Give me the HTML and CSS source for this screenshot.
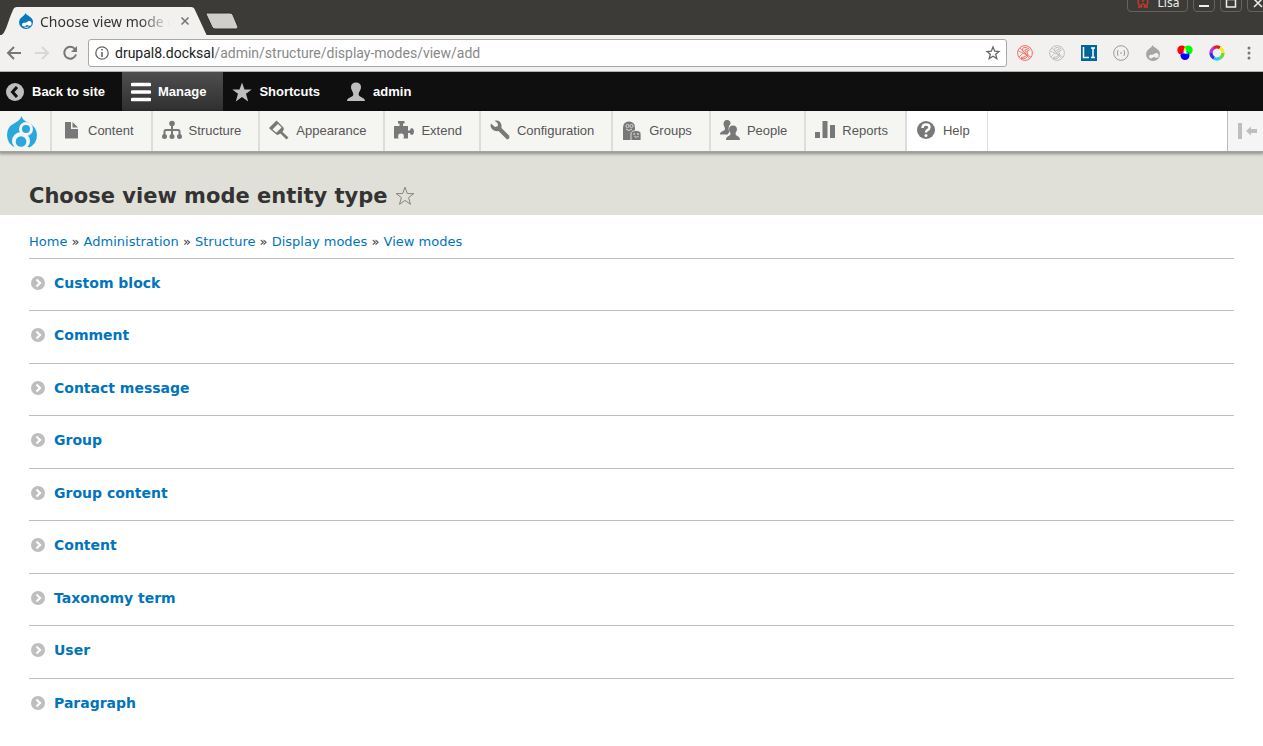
FILE: index.html
```html
<!DOCTYPE html>
<html lang="en">
<head>
  <meta charset="UTF-8">
  <meta name="viewport" content="width=device-width, initial-scale=1.0">
  <title>Choose view mode entity type</title>
  <link rel="stylesheet" href="styles.css">
</head>
<body>
  <!-- Browser window -->
  <div class="titlebar">
    <div class="tab">
      <svg class="tab-shape" viewBox="0 0 208 29" width="208" height="29"><path d="M0 29 C6 27 7 16 13 3 Q14 0 17 0 H191 Q194 0 195 3 L207 29Z" fill="#f2f1f0"/></svg>
      <svg class="favicon" viewBox="0 0 16 16" width="16" height="16"><path d="M7.500 0c1 2 2 2 4 3.500Q15 5.800 15 9A7 7 0 0 1 1 9Q1 5.800 4 4Q7 2 7.500 0Z" fill="#0678be"/><path d="M11.500 8c-2 0-3 1.800-4.300 1.800-1.200 0-3.200-.2-3.200 2s3 2 4.500.5c1.300-1 2 .9 3.800.5s2-4.800-.8-4.800Z" fill="#fff"/><path d="M6.500 14q2 1 4-.2" stroke="#fff" fill="none"/></svg>
      <span class="tab-title">Choose view mode entity type</span>
      <button class="tab-close" aria-label="Close tab"><svg viewBox="0 0 10 10" width="10" height="10"><path d="M1.500 1.500l7 7M8.500 1.500L1.500 8.500" stroke="#777" stroke-width="1.600"/></svg></button>
    </div>
    <button class="new-tab" aria-label="New tab"><svg viewBox="0 0 34 18" width="34" height="18"><path d="M2 1H25Q27 1 28 3L33 15Q33 17 31 17H10Q8 17 7 15L1 2Q1 1 2 1Z" fill="#cfcecd" stroke="#2e2d29"/></svg></button>
    <div class="window-buttons">
      <button class="profile"><svg viewBox="0 0 14 12" width="14" height="12"><path d="M5 1Q-1 5 5 10M9 1Q15 5 9 10M2 10H5.500V7M12 10H8.500V7" fill="none" stroke="#c0392b" stroke-width="1.500"/><path d="M7 0V5M7 6V8" stroke="#c0392b" stroke-width="1.500"/></svg>Lisa</button>
      <button class="win" aria-label="Minimize"><svg viewBox="0 0 12 12" width="12" height="12"><path d="M1 9H11" stroke="#eee" stroke-width="2"/></svg></button>
      <button class="win" aria-label="Maximize"><svg viewBox="0 0 12 12" width="12" height="12"><path d="M1.500 2.500H10.500V10H1.500Z" fill="none" stroke="#eee" stroke-width="1.500"/></svg></button>
      <button class="win" aria-label="Close"><svg viewBox="0 0 12 12" width="12" height="12"><path d="M2 2L10 10M10 2L2 10" stroke="#eee" stroke-width="1.500"/></svg></button>
    </div>
  </div>

  <div class="browser-bar">
    <div class="navs">
      <button aria-label="Back"><svg viewBox="0 0 16 16" width="16" height="16"><path d="M15 8H2M8 2L2 8L8 14" fill="none" stroke="#777" stroke-width="2"/></svg></button>
      <button aria-label="Forward"><svg viewBox="0 0 16 16" width="16" height="16"><path d="M1 8H14M8 2L14 8L8 14" fill="none" stroke="#d8d7d6" stroke-width="2"/></svg></button>
      <button aria-label="Reload"><svg viewBox="0 0 16 16" width="16" height="16"><path d="M13 4A6 6 0 1 0 14 9.500" fill="none" stroke="#777" stroke-width="2"/><path d="M15 1V7H9Z" fill="#777"/></svg></button>
    </div>
    <div class="address">
      <svg viewBox="0 0 14 14" width="14" height="14"><circle cx="7" cy="7" r="6.200" fill="none" stroke="#666" stroke-width="1.300"/><path d="M7 6V11M7 3V4.600" stroke="#666" stroke-width="1.600"/></svg>
      <span class="url">drupal8.docksal<span class="path">/admin/structure/display-modes/view/add</span></span>
      <svg viewBox="0 0 16 16" width="16" height="16"><path d="M8 2L9.700 6.200L14 6.500L10.700 9.300L11.800 13.500L8 11.200L4.200 13.500L5.300 9.300L2 6.500L6.300 6.200Z" fill="none" stroke="#666" stroke-width="1.300"/></svg>
    </div>
    <div class="extensions">
      <svg viewBox="0 0 16 16" width="16" height="16" stroke="#f0705f" fill="none"><circle cx="8" cy="8" r="7.400"/><path d="M12 3.500Q5 1 5.500 5Q6 7 9 8.500Q11 12 4 12.500M12 5.500Q8 3.500 7.500 5.500Q11 7 11 10Q10 14.500 4 13.500"/><path d="M1.500 6L14 12M3 3L13 14M2 12L6 8M10 7L13.500 4" stroke-width=".8"/></svg>
      <svg viewBox="0 0 16 16" width="16" height="16" stroke="#bfbfbf" fill="none"><circle cx="8" cy="8" r="7.400"/><path d="M12 3.500Q5 1 5.500 5Q6 7 9 8.500Q11 12 4 12.500M12 5.500Q8 3.500 7.500 5.500Q11 7 11 10Q10 14.500 4 13.500"/><path d="M1.500 6L14 12M3 3L13 14M2 12L6 8M10 7L13.500 4" stroke-width=".8"/></svg>
      <svg viewBox="0 0 16 16" width="16" height="16"><path d="M0 0H16V16H0Z" fill="#069"/><path d="M2.500 2V12.500H8M10 3H14M12 3V12.500M10 12.500H14" stroke="#fff" stroke-width="1.500" fill="none"/></svg>
      <svg viewBox="0 0 16 16" width="16" height="16" fill="none" stroke="#999"><circle cx="8" cy="8" r="7.300"/><path d="M5.500 5Q4.500 5 4.500 8T5.500 11M10.500 5Q11.500 5 11.500 8T10.500 11M7 8H9"/></svg>
      <svg viewBox="0 0 16 16" width="16" height="16"><path d="M7.500 0c1 2 2 2 4 3.500Q15 5.800 15 9A7 7 0 0 1 1 9Q1 5.800 4 4Q7 2 7.500 0Z" fill="#a5a5a5"/><path d="M11.500 8c-2 0-3 1.800-4.300 1.800-1.200 0-3.200-.2-3.200 2s3 2 4.500.5c1.300-1 2 .9 3.800.5s2-4.800-.8-4.800Z" fill="#f2f1f0"/></svg>
      <svg viewBox="0 0 16 16" width="16" height="16"><circle cx="4.800" cy="5" r="4.500" fill="red"/><circle cx="11.200" cy="5" r="4.500" fill="#0f0"/><circle cx="8" cy="10.500" r="4.500" fill="#00f"/><path d="M8 2L9.500 6H6.500Z" fill="#ff0"/><path d="M4 8.500L7 6L8 9Z" fill="#f0f"/><path d="M12 8.500L9 6L8 9Z" fill="#0ff"/><circle cx="8" cy="7" r="1.500" fill="#fff"/></svg>
      <svg viewBox="0 0 16 16" width="16" height="16" fill="none" stroke-width="3.200"><path d="M4.500 3.200A6 6 0 0 1 11 2.800" stroke="#d22"/><path d="M11 2.800A6 6 0 0 1 14 8" stroke="#ee2"/><path d="M14 8A6 6 0 0 1 11 13.200" stroke="#6d3"/><path d="M11 13.200A6 6 0 0 1 5 13.200" stroke="#2ce"/><path d="M5 13.200A6 6 0 0 1 2 8" stroke="#33d"/><path d="M2 8A6 6 0 0 1 5 2.800" stroke="#b3d"/></svg>
      <svg viewBox="0 0 16 16" width="16" height="16" fill="#777"><circle cx="8" cy="3" r="1.500"/><circle cx="8" cy="8" r="1.500"/><circle cx="8" cy="13" r="1.500"/></svg>
    </div>
  </div>

  <!-- Drupal toolbar -->
  <nav class="toolbar">
    <a class="back" href="#"><svg viewBox="0 0 20 20" width="20" height="20"><circle cx="10" cy="10" r="9" fill="#bebebe"/><path d="M12 5L7.500 10L12 15" fill="none" stroke="#0f0f0f" stroke-width="3"/></svg>Back to site</a>
    <a class="active" href="#"><svg viewBox="0 0 20 20" width="20" height="20"><path d="M1.500 2.500H18.500M1.500 10H18.500M1.500 17.500H18.500" stroke="#fff" stroke-width="3.600" stroke-linecap="round"/></svg>Manage</a>
    <a href="#"><svg viewBox="0 0 20 20" width="20" height="20"><path d="M10 .5L12.500 7.400H19.700L14 11.800L16.200 19.500L10 15L3.800 19.500L6 11.800L.3 7.400H7.500Z" fill="#bebebe"/></svg>Shortcuts</a>
    <a href="#"><svg viewBox="0 0 20 20" width="20" height="20"><path d="M10 .5c3 0 5 1.500 5 4.500 0 3.500-2.300 4.500-2.300 7.500 0 3 6.300 2.500 6.300 6.500H1c0-4 6.300-3.500 6.300-6.500 0-3-2.300-4-2.300-7.500 0-3 2-4.500 5-4.500Z" fill="#bebebe"/></svg>admin</a>
  </nav>

  <nav class="tray">
    <a class="logo" href="#" aria-label="Drupal">
      <svg viewBox="0 0 30 33" width="30" height="33">
        <path d="M14.500 0Q15.500 4 21 6.500Q30 11 30 19Q30 28 21.500 32H9Q0 28 0 19Q0 11 7 7.500Q13.500 4 14.500 0Z" fill="#29a8e0"/>
        <circle cx="19" cy="13" r="7" fill="#f5f5f2"/>
        <circle cx="14" cy="25" r="9" fill="#f5f5f2"/>
        <path d="M8 31H22V33H8Z" fill="#f5f5f2"/>
        <circle cx="19" cy="13" r="4" fill="#29a8e0"/>
        <circle cx="14" cy="25.500" r="5.300" fill="#29a8e0"/>
      </svg>
    </a>
    <a href="#"><svg viewBox="0 0 20 20" width="20" height="20"><path d="M4 2H10V9H17V18.500H4ZM11.500 2L17 7.500H11.500Z"/></svg>Content</a>
    <a href="#"><svg viewBox="0 0 20 20" width="20" height="20"><circle cx="10" cy="3.500" r="2.800"/><path d="M10 4V16M2.500 16V11.500Q2.500 10 4 10H16Q17.500 10 17.500 11.500V16" fill="none" stroke="#787878" stroke-width="2"/><circle cx="2.500" cy="16.500" r="2.500"/><circle cx="10" cy="16.500" r="2.500"/><circle cx="17.500" cy="16.500" r="2.500"/></svg>Structure</a>
    <a href="#"><svg viewBox="0 0 20 20" width="20" height="20"><path d="M0 8L7.500 .5L9.500 2.500L2 10Z"/><path d="M2.500 9.500L9 3L14 8L8 14Z" fill="none" stroke="#787878" stroke-width="1.300"/><path d="M7 13L13 7L15 9L13.500 12L19.500 17.500L17.500 19.500L11.500 13.500L8.500 15Z"/></svg>Appearance</a>
    <a href="#"><svg viewBox="0 0 20 20" width="20" height="20"><path d="M0 6H5.500V3.500H4V1H10.500V3.500H9V6H14V10.500H16Q16 8 18 8Q20 8.500 20 11.500T18 15Q16 15 16 13H14V18.500H9.500Q11 13.500 7 13.500T4.500 18.500H0Z"/></svg>Extend</a>
    <a href="#"><svg viewBox="0 0 20 20" width="20" height="20"><path d="M1 3.500L5 7L8 6L7.500 3L4.500.8Q10-.5 11.500 5V8L19 15.500Q20.500 19 17 19.500L8.500 11Q2 12 .5 6Z"/></svg>Configuration</a>
    <a href="#"><svg viewBox="0 0 20 20" width="20" height="20"><path d="M1 20V8Q1 1.500 7 1.500T13 8V20Z"/><path d="M9 20.500V14Q9 10.500 14 10.500T19 14V20.500Z" stroke="#f5f5f2" stroke-width=".8"/><path d="M4 9Q7 12 10 9M12.500 16.500Q14.500 18 16.500 16.500" fill="none" stroke="#ddd"/><g fill="none" stroke="#ddd" stroke-width=".9"><circle cx="5.500" cy="6" r="1.600"/><circle cx="9.500" cy="6" r="1.600"/><circle cx="12.300" cy="14" r=".6"/><circle cx="16" cy="14" r=".6"/></g></svg>Groups</a>
    <a href="#"><svg viewBox="0 0 20 20" width="20" height="20"><path d="M7 0c2.500 0 4 2 3.500 4Q8 6 8.500 9l1 3-2 2.500H0c0-4 5-3 5-5.500C5 7 3.500 6 3.500 4S4.500 0 7 0Z"/><path d="M13 5.500c2.500 0 4 1.500 4 3.800 0 2-1.500 3-1.500 4.500 0 2.500 4.500 2 4.500 6.200H6c0-4.200 4.500-3.700 4.500-6.200 0-1.500-1.500-2.500-1.500-4.500 0-2.300 1.500-3.800 4-3.800Z"/></svg>People</a>
    <a href="#"><svg viewBox="0 0 20 20" width="20" height="20"><path d="M0 12H5V18H0ZM7.500 1H12.500V18H7.500ZM15 5H20V18H15Z"/></svg>Reports</a>
    <a class="help" href="#"><svg viewBox="0 0 20 20" width="20" height="20"><circle cx="10" cy="10" r="9"/><path d="M6.500 8Q6.500 4.500 10 4.500T13.500 7.500Q13.500 9 11.500 10Q10 11 10 12.500" fill="none" stroke="#fff" stroke-width="2.400"/><circle cx="10" cy="15.500" r="1.500" fill="#fff"/></svg>Help</a>
    <button class="orientation" aria-label="Vertical orientation"><svg viewBox="0 0 20 16" width="20" height="16"><path d="M0 0H4V16H0ZM8 8L13 3.500V6H19V10H13V12.500Z" fill="#bebebe"/></svg></button>
  </nav>

  <header class="page-header">
    <h1>Choose view mode entity type</h1>
    <a href="#" aria-label="Add to shortcuts"><svg viewBox="0 0 20 20" width="20" height="20"><path d="M10 1.200L12.300 7.600H18.800L13.600 11.600L15.500 18.300L10 14.400L4.500 18.300L6.400 11.600L1.200 7.600H7.700Z" fill="none" stroke="#85857a"/></svg></a>
  </header>

  <main>
    <nav class="breadcrumb">
      <a href="#">Home</a> » <a href="#">Administration</a> » <a href="#">Structure</a> » <a href="#">Display modes</a> » <a href="#">View modes</a>
    </nav>
    <ul class="admin-list">
      <li><a href="#">Custom block</a></li>
      <li><a href="#">Comment</a></li>
      <li><a href="#">Contact message</a></li>
      <li><a href="#">Group</a></li>
      <li><a href="#">Group content</a></li>
      <li><a href="#">Content</a></li>
      <li><a href="#">Taxonomy term</a></li>
      <li><a href="#">User</a></li>
      <li><a href="#">Paragraph</a></li>
    </ul>
  </main>

  <script>
    // every list entry gets the same round arrow
    document.querySelectorAll(".admin-list a").forEach(a => {
      a.insertAdjacentHTML("afterbegin", '<svg viewBox="0 0 14 14" width="14" height="14"><circle cx="7" cy="7" r="7" fill="#bebebe"/><path d="M5.500 3.500L9 7L5.500 10.500" fill="none" stroke="#fff" stroke-width="2.200"/></svg>');
    });
  </script>
</body>
</html>
```
FILE: styles.css
```css
* {
  box-sizing: border-box;
}
body {
  margin: 0;
  background: #fff;
  color: #333;
  font-family: "DejaVu Sans", sans-serif;
  font-size: 13px;
}
a {
  color: #0074bd;
  text-decoration: none;
}
button {
  border: 0;
  padding: 0;
  background: none;
  font: inherit;
}
svg {
  display: block;
  flex: none;
}

/* browser window */
.titlebar {
  display: flex;
  align-items: flex-end;
  height: 35px;
  background: #3c3b37;
  font-family: "Noto Sans", sans-serif;
}
.tab {
  position: relative;
  display: flex;
  align-items: center;
  width: 208px;
  height: 28px;
  padding: 0 18px;
}
.tab-shape {
  position: absolute;
  left: 0;
  top: 0;
}
.favicon,
.tab-title,
.tab-close {
  position: relative;
}
.tab-title {
  width: 130px;
  margin: 0 10px 0 6px;
  overflow: hidden;
  white-space: nowrap;
  font-size: 14px;
  color: #333;
  -webkit-mask-image: linear-gradient(to right, #000 100px, transparent 130px);
  mask-image: linear-gradient(to right, #000 100px, transparent 130px);
}
.new-tab {
  margin: 0 0 5px -3px;
}
.window-buttons {
  display: flex;
  gap: 5px;
  align-self: flex-start;
  margin: -7px -6px 0 auto;
}
.window-buttons button {
  display: flex;
  align-items: center;
  justify-content: center;
  height: 19px;
  border: 1px solid #66645e;
  border-radius: 4px;
  color: #eee;
}
.window-buttons .profile {
  width: 61px;
  gap: 8px;
  font-size: 12px;
}
.window-buttons .win {
  width: 22px;
}
.browser-bar {
  display: flex;
  align-items: center;
  height: 37px;
  padding: 0 6px;
  background: #f2f1f0;
  border-bottom: 1px solid #b0afae;
}
.navs {
  display: flex;
  gap: 12px;
  margin-right: 10px;
}
.address {
  display: flex;
  flex: 1;
  align-items: center;
  height: 28px;
  padding: 0 5px 0 6px;
  background: #fff;
  border: 1px solid #a8a8a8;
  border-radius: 3px;
}
.url {
  flex: 1;
  margin-left: 6px;
  font-family: Roboto, sans-serif;
  font-size: 14px;
  color: #222;
}
.path {
  color: #888;
}
.extensions {
  display: flex;
  gap: 16px;
  margin-left: 10px;
}

/* admin toolbar */
.toolbar,
.tray {
  display: flex;
  font-family: "Liberation Sans", sans-serif;
}
.toolbar {
  height: 39px;
  background: #0f0f0f;
}
.toolbar a,
.tray a {
  display: flex;
  align-items: center;
  gap: 7px;
  padding: 0 17px 0 9px;
}
.toolbar a {
  color: #fff;
  font-weight: bold;
}
.toolbar .back {
  padding-left: 5px;
}
.toolbar .active {
  background: linear-gradient(#4e4e4e, #303030);
}
.tray {
  position: relative;
  height: 41px;
  border-bottom: 1px solid #a2a29e;
  box-shadow: 0 1px 3px 1px rgba(0, 0, 0, 0.35);
}
.tray a {
  padding-bottom: 2px;
  background: #f5f5f2;
  border-right: 2px solid #ddd;
  color: #565656;
}
.tray a svg {
  fill: #787878;
}
.tray .logo {
  width: 52px;
  padding: 2px 0 0 7px;
}
.tray .help {
  background: #fff;
  border-right-width: 1px;
}
.orientation {
  width: 36px;
  margin-left: auto;
  padding-left: 10px;
  background: #f5f5f5;
  border-left: 1px solid #bbb;
}

/* page */
.page-header {
  display: flex;
  align-items: center;
  gap: 8px;
  height: 63px;
  padding: 24px 29px 0;
  background: #e0e0d8;
}
h1 {
  margin: 0;
  font-size: 21px;
  line-height: 24px;
}
main {
  padding: 17px 29px;
}
.breadcrumb {
  line-height: 20px;
}
.admin-list {
  display: grid;
  grid-auto-rows: 52px 53px;
  margin: 6px 0 0;
  padding: 0;
  list-style: none;
}
.admin-list li {
  border-top: 1px solid #bfbfbf;
}
.admin-list a {
  display: flex;
  align-items: center;
  gap: 9px;
  padding: 14px 0 14px 2px;
  font-size: 14px;
  font-weight: bold;
  line-height: 20px;
}
```
